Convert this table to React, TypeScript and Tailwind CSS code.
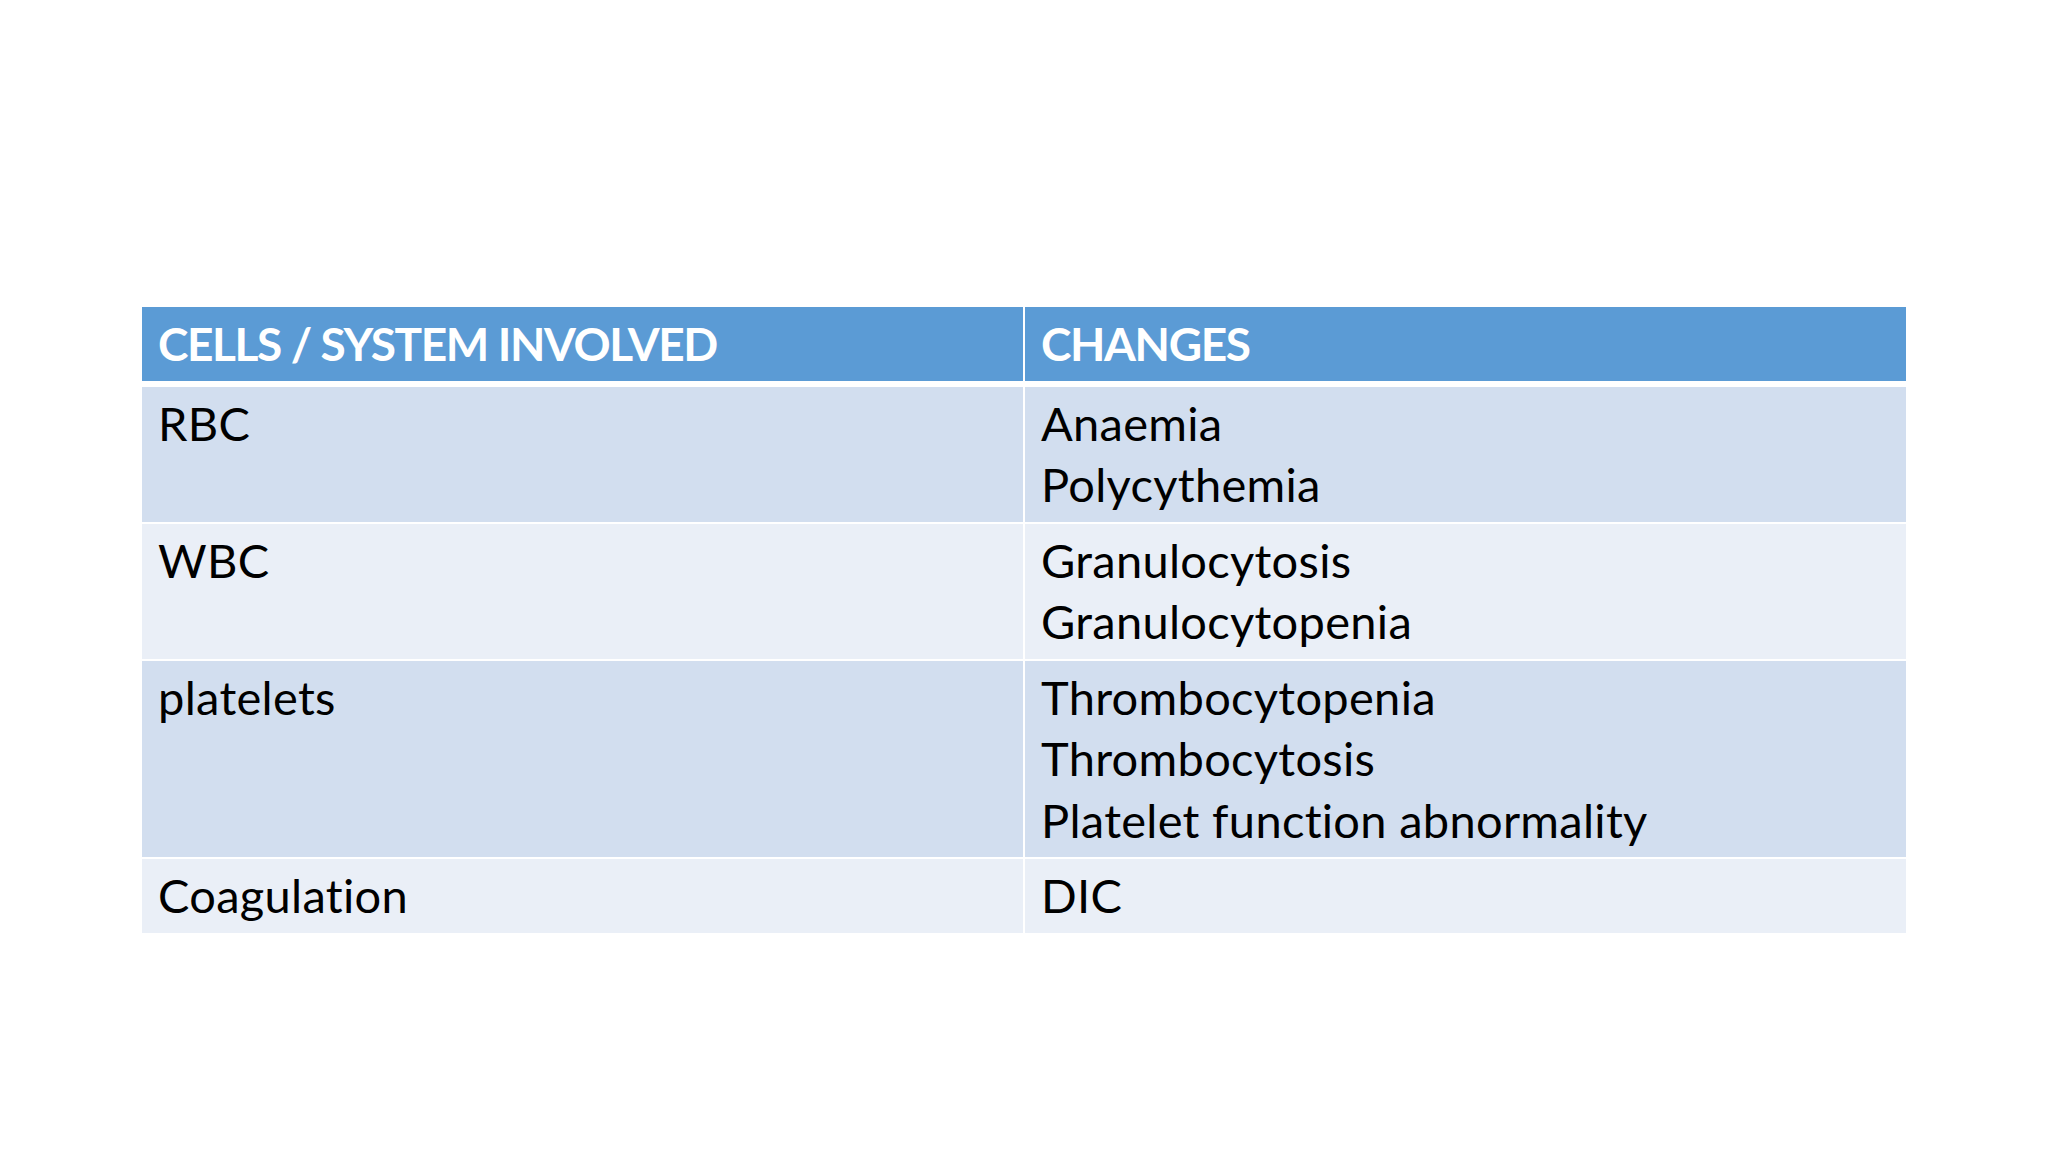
const rows = [
  { cell: "RBC", changes: ["Anaemia", "Polycythemia"], bg: "bg-[#d2deef]" },
  { cell: "WBC", changes: ["Granulocytosis", "Granulocytopenia"], bg: "bg-[#eaeff7]" },
  {
    cell: "platelets",
    changes: ["Thrombocytopenia", "Thrombocytosis", "Platelet function abnormality"],
    bg: "bg-[#d2deef]",
  },
  { cell: "Coagulation", changes: ["DIC"], bg: "bg-[#eaeff7]" },
];

const App = () => {
  return (
    <div
      className="w-[2048px] h-[1152px] bg-white pt-[307px] pl-[142px]"
      style={{ fontFamily: "Lato, 'Open Sans', sans-serif" }}
    >
      <div className="flex flex-col w-[1764px]">
        {/* header */}
        <div className="grid grid-cols-[881px_881px] gap-x-[2px] mb-[6px]">
          <div className="bg-[#5b9bd5] px-[16px] py-[6px] text-white font-bold text-[46px] leading-[61.5px] tracking-[-1.4px]">
            CELLS / SYSTEM INVOLVED
          </div>
          <div className="bg-[#5b9bd5] px-[16px] py-[6px] text-white font-bold text-[46px] leading-[61.5px] tracking-[-1.4px]">
            CHANGES
          </div>
        </div>
        {/* body */}
        <div className="flex flex-col gap-y-[2px]">
          {rows.map((row, index) => (
            <div key={index} className="grid grid-cols-[881px_881px] gap-x-[2px]">
              <div className={`${row.bg} px-[16px] py-[6px] text-black text-[47px] leading-[61.5px] tracking-[0.3px]`}>
                {row.cell}
              </div>
              <div className={`${row.bg} px-[16px] py-[6px] text-black text-[47px] leading-[61.5px] tracking-[0.3px]`}>
                {row.changes.map((item) => (
                  <div key={item}>{item}</div>
                ))}
              </div>
            </div>
          ))}
        </div>
      </div>
    </div>
  );
};

export default App;
